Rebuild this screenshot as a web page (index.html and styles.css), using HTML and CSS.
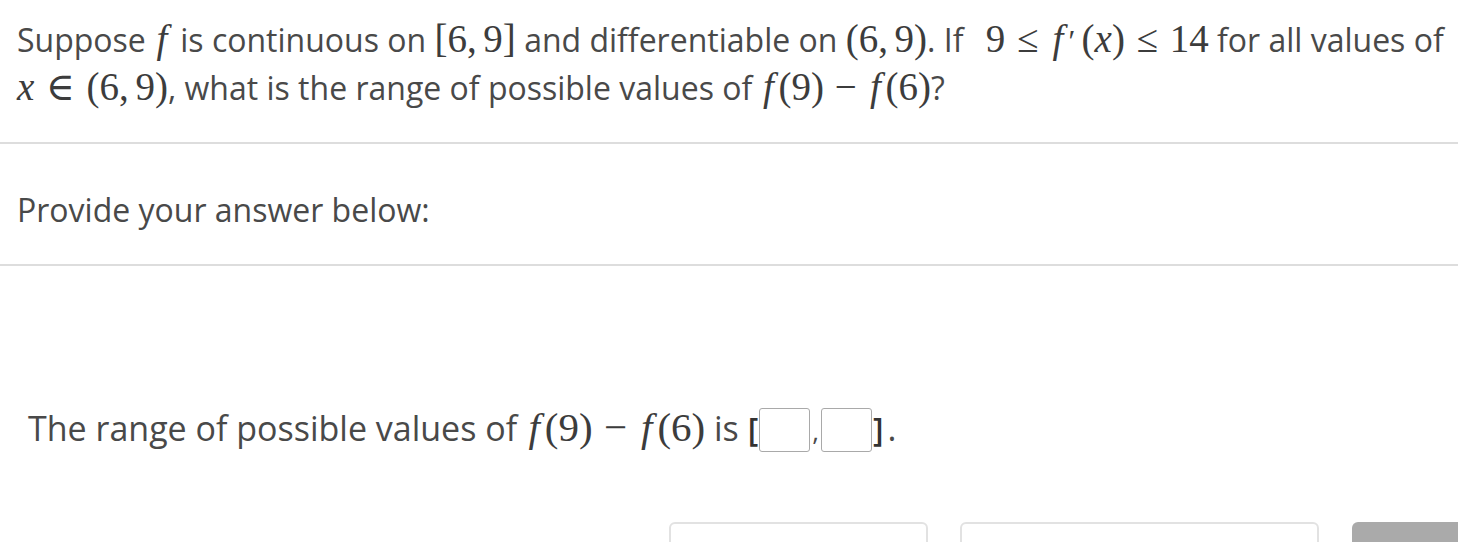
FILE: index.html
```html
<!DOCTYPE html>
<html>
<head>
<meta charset="utf-8">
<link rel="stylesheet" href="styles.css">
</head>
<body>
<div class="page">
  <div class="question">
    <p class="q-text">Suppose <span class="m"><i class="fn">f</i></span> is continuous on <span class="m">[6,<span class="th"></span>9]</span> and differentiable on <span class="m">(6,<span class="th"></span>9)</span>. If <span class="m m-ineq">9<span class="rel">≤</span><i class="fn">f</i><span class="pr">′</span>(<i>x</i>)<span class="rel">≤</span>14</span> for all values of <span class="m"><i>x</i><span class="rel">∈</span>(6,<span class="th"></span>9)</span>, what is the range of possible values of <span class="m"><i class="fn">f</i>(9)<span class="bin">−</span><i class="fn">f</i>(6)</span>?</p>
  </div>
  <div class="prompt">Provide your answer below:</div>
  <div class="answer">
    <div class="answer-line">The range of possible values of <span class="m"><i class="fn">f</i>(9)<span class="bin">−</span><i class="fn">f</i>(6)</span> is <span class="br">[</span><span class="box"></span><span class="comma">,</span><span class="box"></span><span class="br">]</span><span class="dot">.</span></div>
  </div>
  <div class="actions">
    <div class="btn btn-a"></div>
    <div class="btn btn-b"></div>
    <div class="btn btn-grey"></div>
  </div>
</div>
</body>
</html>
```
FILE: styles.css
```css
html, body {
  margin: 0;
  padding: 0;
  background: #fff;
  overflow: hidden;
}
body {
  font-family: "Open Sans", "Liberation Sans", sans-serif;
  color: #494949;
  font-size: 32px;
}
.page {
  width: 1458px;
  height: 542px;
  overflow: hidden;
}
.question {
  box-sizing: border-box;
  height: 144px;
  padding: 16px 0 0 17px;
  border-bottom: 2px solid #dddddd;
}
.q-text {
  margin: 0;
  line-height: 48px;
}
.m {
  font-family: "Liberation Serif", "DejaVu Serif", serif;
  font-size: 39px;
  line-height: 1;
  white-space: nowrap;
  color: #3c3c3c;
}
.m-ineq {
  padding-left: 0.36em;
}
.m i {
  font-style: italic;
}
.m .fn {
  padding: 0 0.12em 0 0.06em;
}
.th {
  display: inline-block;
  width: 0.17em;
}
.rel {
  padding: 0 0.3em;
}
.bin {
  padding: 0 0.28em;
}
.pr {
  font-size: 0.8em;
  padding: 0 0.2em 0 0.02em;
}
.prompt {
  box-sizing: border-box;
  height: 122px;
  padding-left: 17px;
  padding-top: 42px;
  line-height: 48px;
  border-bottom: 2px solid #dddddd;
}
.answer {
  box-sizing: border-box;
  height: 256px;
  padding-left: 28px;
  padding-top: 138px;
  font-size: 34px;
}
.answer-line {
  line-height: 48px;
  white-space: nowrap;
}
.answer .m {
  font-size: 41px;
}
.br {
  color: #333333;
  font-weight: 600;
  font-size: 32px;
}
.box {
  display: inline-block;
  box-sizing: border-box;
  width: 51px;
  height: 44px;
  border: 1px solid #a9a9a9;
  border-radius: 3px;
  background: #fff;
  vertical-align: -11px;
  margin: 0 1px;
}
.comma {
  font-size: 26px;
  margin: 0 1px;
}
.dot {
  margin-left: 4px;
}
.actions {
  display: flex;
}
.btn {
  flex-shrink: 0;
  height: 40px;
  border-radius: 6px;
  box-sizing: border-box;
}
.btn-a {
  margin-left: 669px;
  width: 259px;
  border: 2px solid #e2e2e2;
}
.btn-b {
  margin-left: 32px;
  width: 359px;
  border: 2px solid #e2e2e2;
}
.btn-grey {
  margin-left: 33px;
  width: 120px;
  background: #aaaaaa;
}
```
